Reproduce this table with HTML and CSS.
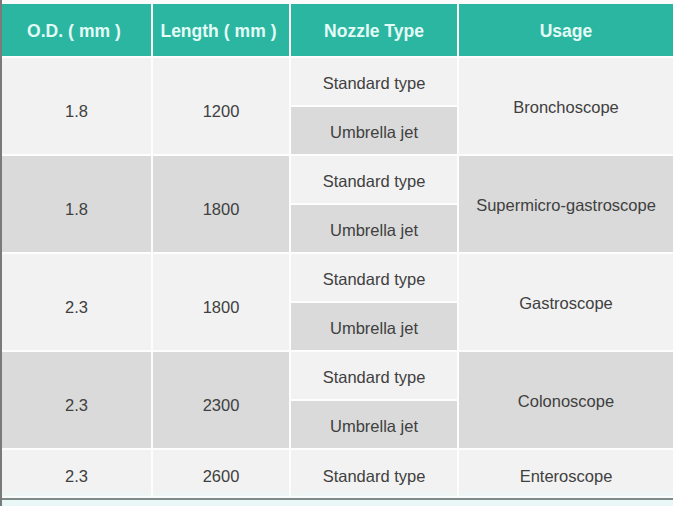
FILE: index.html
```html
<!DOCTYPE html>
<html>
<head>
<meta charset="utf-8">
<link rel="stylesheet" href="styles.css">
</head>
<body>
<div class="frame">
  <div class="table">
    <div class="th">O.D.<span class="paren">(</span>mm<span class="paren">)</span></div>
    <div class="th">Length<span class="paren">(</span>mm<span class="paren">)</span></div>
    <div class="th">Nozzle Type</div>
    <div class="th">Usage</div>

    <div class="td light span2 big">1.8</div>
    <div class="td light span2 big">1200</div>
    <div class="td light">Standard type</div>
    <div class="td light span2">Bronchoscope</div>
    <div class="td dark">Umbrella jet</div>

    <div class="td dark span2 big">1.8</div>
    <div class="td dark span2 big">1800</div>
    <div class="td light">Standard type</div>
    <div class="td dark span2">Supermicro-gastroscope</div>
    <div class="td dark">Umbrella jet</div>

    <div class="td light span2 big">2.3</div>
    <div class="td light span2 big">1800</div>
    <div class="td light">Standard type</div>
    <div class="td light span2">Gastroscope</div>
    <div class="td dark">Umbrella jet</div>

    <div class="td dark span2 big">2.3</div>
    <div class="td dark span2 big">2300</div>
    <div class="td light">Standard type</div>
    <div class="td dark span2">Colonoscope</div>
    <div class="td dark">Umbrella jet</div>

    <div class="td light last">2.3</div>
    <div class="td light last">2600</div>
    <div class="td light last">Standard type</div>
    <div class="td light last">Enteroscope</div>
  </div>
  <div class="bottom"></div>
</div>
</body>
</html>
```

FILE: styles.css
```css
html, body {
  margin: 0;
  padding: 0;
  background: #fbfbfb;
}
.frame {
  width: 673px;
  height: 506px;
  box-sizing: border-box;
  border-left: 2px solid #7a7a7a;
  padding-top: 4px;
  background: #fbfbfb;
  font-family: "Liberation Sans", Arial, sans-serif;
  overflow: hidden;
}
.table {
  display: grid;
  grid-template-columns: 149px 136px 166px 1fr;
  grid-template-rows: 52px repeat(8, 47px) 46px;
  column-gap: 2px;
  row-gap: 2px;
  background: #fdfdfd;
}
.th {
  background: #2bb6a2;
  color: #e4fbf6;
  font-weight: bold;
  font-size: 17.5px;
  display: flex;
  align-items: center;
  justify-content: center;
  padding-top: 2px;
  white-space: pre;
}
.paren {
  margin: 0 5px;
}
.td {
  display: flex;
  align-items: center;
  justify-content: center;
  font-size: 16.5px;
  color: #404040;
  padding-top: 3px;
}
.big {
  padding-top: 10px;
}
.span2 {
  grid-row: span 2;
}
.light {
  background: #f2f2f2;
}
.dark {
  background: #dadada;
}
.last {
  background: linear-gradient(#f2f2f2 88%, #ecf8f6);
  padding-top: 6px;
}
.bottom {
  margin-top: 2px;
  height: 6px;
  border-top: 2px solid #7d8a88;
  background: #e9f8f6;
}
```
